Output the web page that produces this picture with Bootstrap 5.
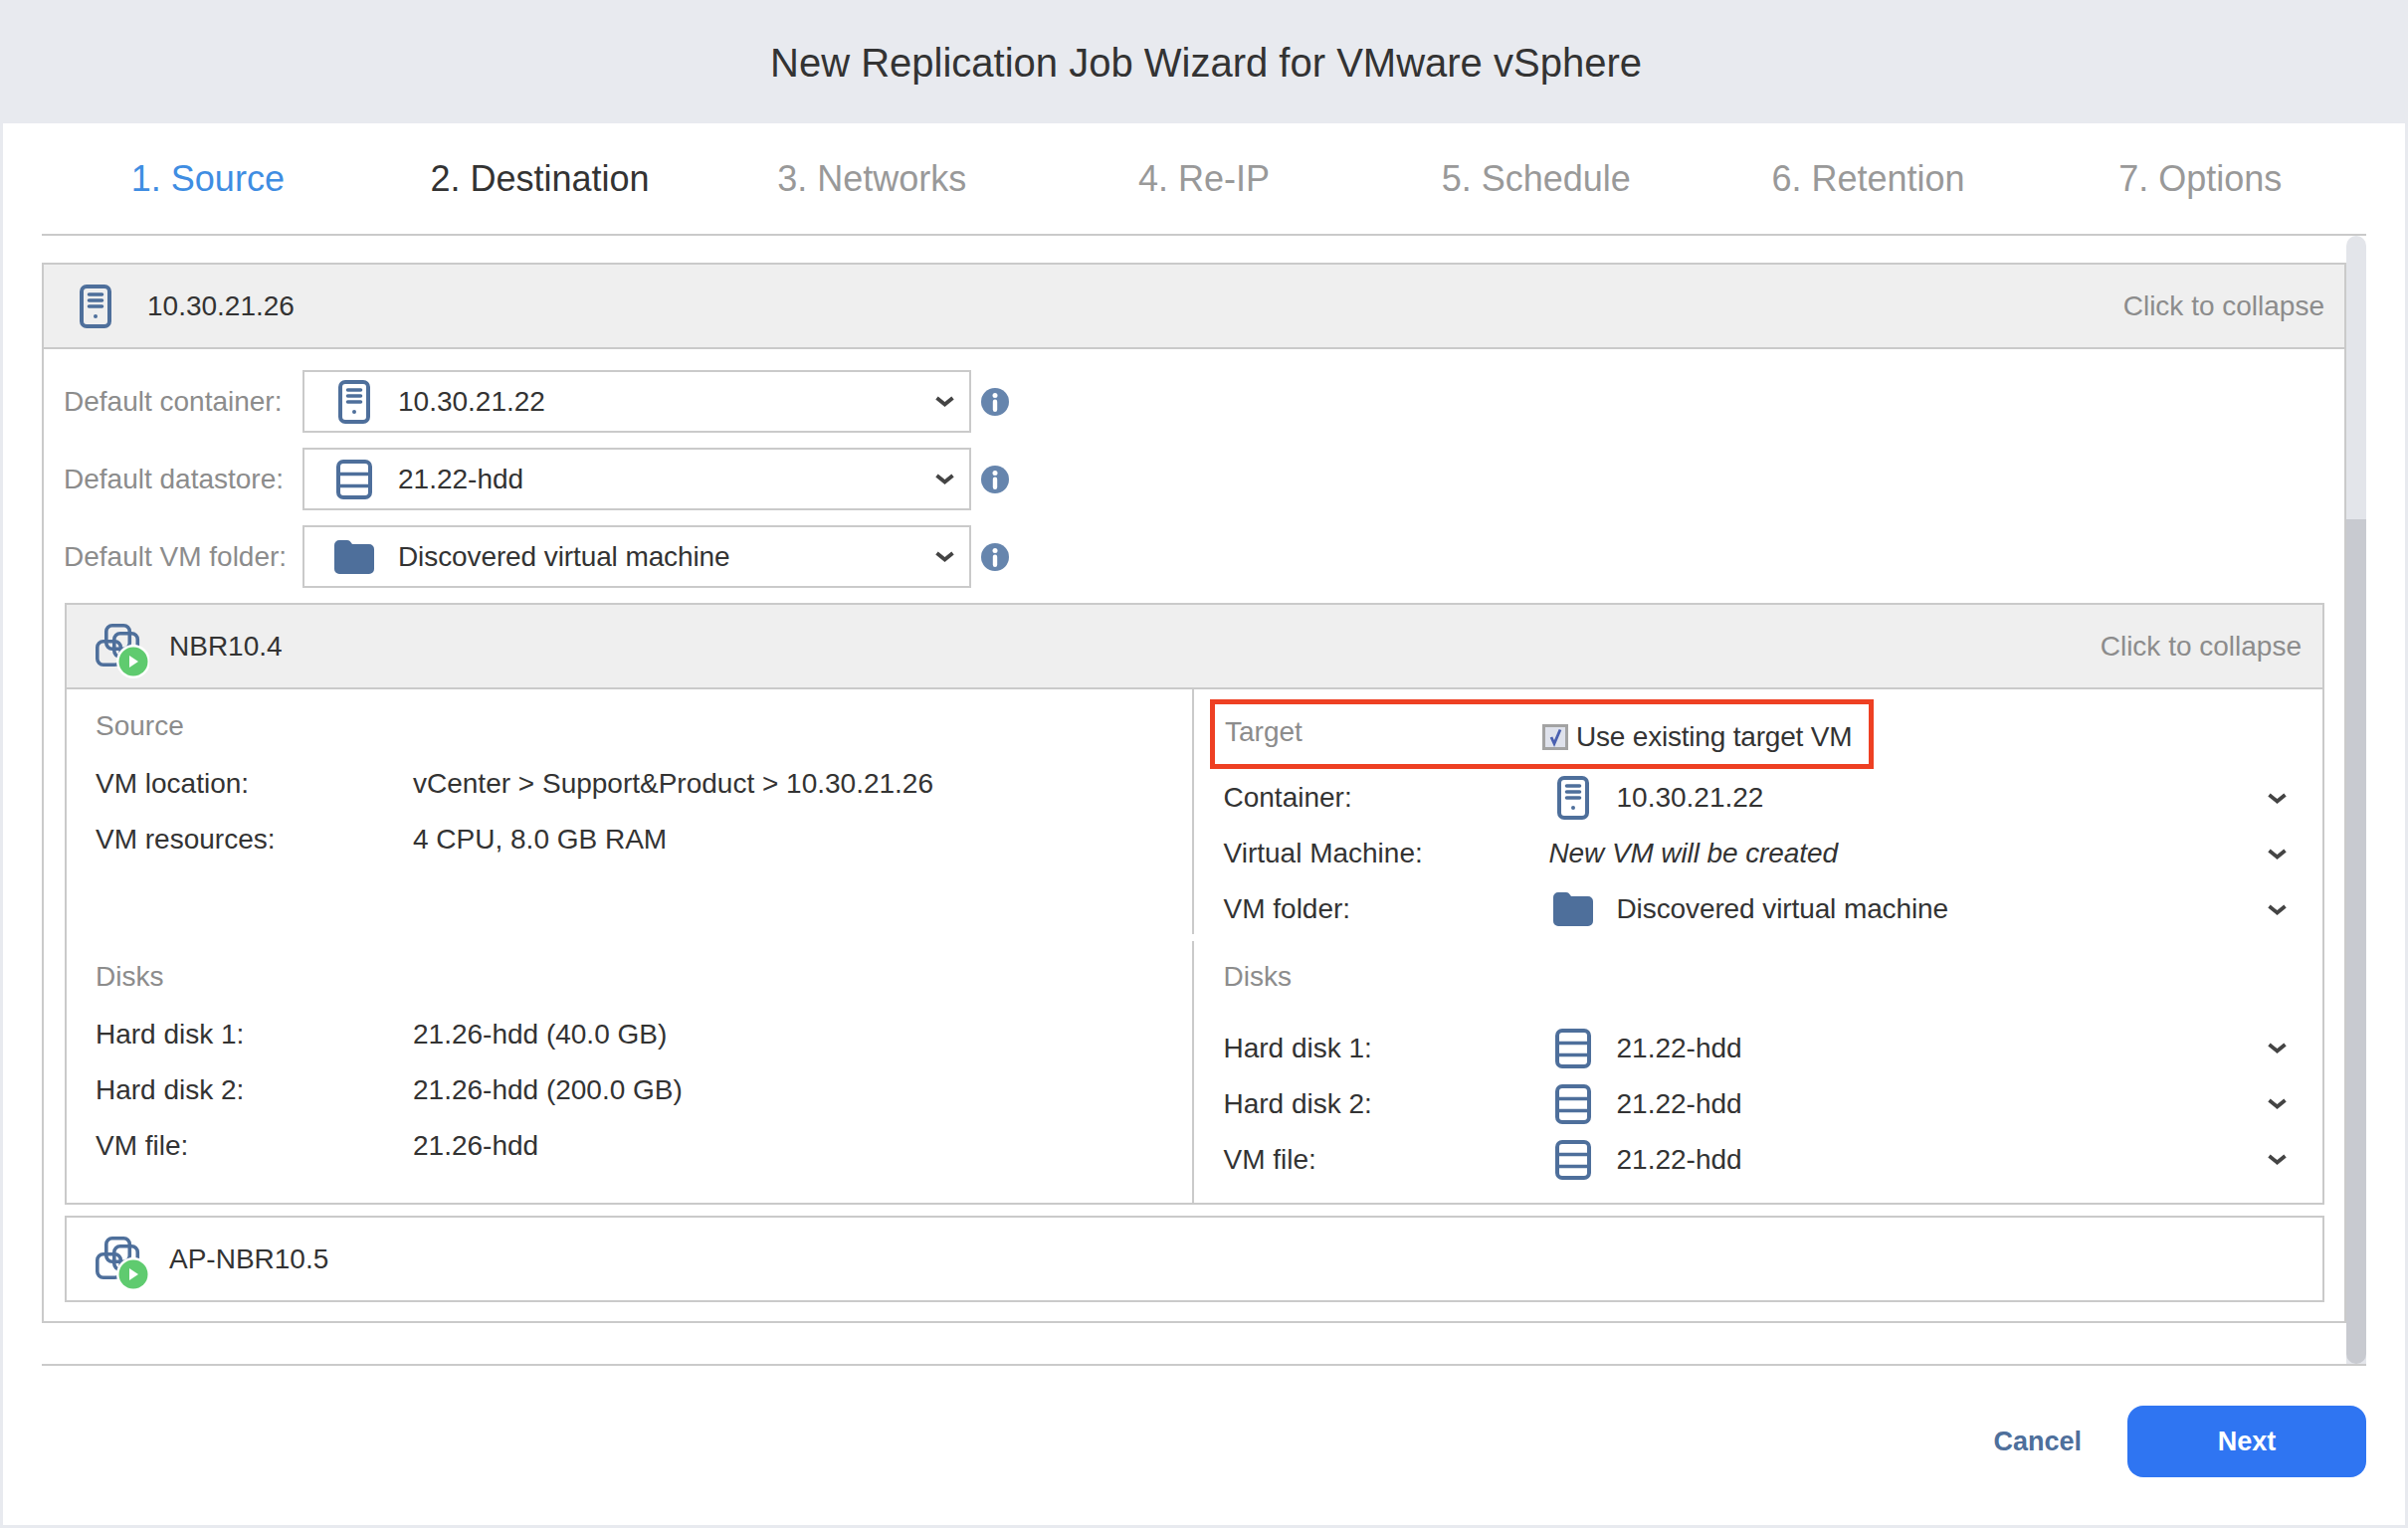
<!DOCTYPE html>
<html lang="en"><head><meta charset="utf-8"><title>New Replication Job Wizard</title>
<link href="https://cdn.jsdelivr.net/npm/bootstrap@5.3.0/dist/css/bootstrap.min.css" rel="stylesheet">
<style>
html,body{height:1536px;overflow:hidden}
body{background:#e8eaef;font-family:"Liberation Sans",Arial,sans-serif;font-size:28px;color:#333}
.wiz-title{height:124px;font-size:40px;line-height:127px;color:#333;margin:0;font-weight:400;padding-left:4px}
.wiz-sheet{height:1409px;margin:0 3px 3px 3px;padding:0 39px 0 39px;background:#fff}
.wiz-tabs{height:113px;border-bottom:2px solid #cacaca}
.wiz-tabs .nav-link{font-size:36px;color:#999;padding:0;line-height:111px}
.wiz-tabs .nav-link.is-on{color:#3f8de2}
.wiz-tabs .nav-link.is-next{color:#333}
.wiz-scroll{height:1134px}
.wiz-content{width:2316px;padding-top:27px}
.wiz-track{width:20px;background:#e3e5ea;border-radius:10px 10px 0 0}
.wiz-thumb{margin-top:285px;height:849px;background:#c8cad0;border-radius:0 0 10px 10px}
.pane{border:2px solid #cacaca}
.pane-outer{height:1066px;width:2316px}
.pane-head{background:#efefef;border-bottom:2px solid #cacaca}
.pane-outer>.pane-head{height:85px;padding:0 20px 0 36px}
.pane-inner .pane-head{height:85px;padding:0 21px 0 29px}
.hint{color:#8c8c8c}
.gap-icon{margin-right:36px}
.gap-vm{margin-right:20px;margin-top:9px}
.field-list{padding:21px 21px 0 20px;gap:15px}
.field-label{width:240px;color:#8c8c8c}
.fake-select{width:672px;height:63px;border:2px solid #cacaca;padding-right:15px}
.fake-select>span:nth-child(2){padding-top:1px}
.ico-slot{width:48px;margin-left:26px;margin-right:20px}
.info-dot{margin-left:10px}
.pane-inner{margin:15px 0 0 21px;width:2271px}
.pane-tail{margin:11px 0 0 21px;width:2271px;height:87px}
.pane-tail .pane-head{background:#fff;border-bottom:0;padding:0 22px 0 29px;height:83px}
.split-top{height:246px}
.split-bottom{height:263px;margin-top:7px}
.side-l{width:1131px;padding-left:29px}
.side-r{flex:1;border-left:2px solid #cacaca;padding-left:29.5px;padding-right:36.5px}
.sect-top{padding-top:9px}
.sect-low{padding-top:8px}
.sect-name{height:56px;line-height:56px;color:#8c8c8c;margin-bottom:2px}
.info-line{height:56.2px;line-height:56px}
.info-key{width:319px}
.r-key{width:327px}
.tight{letter-spacing:-.1px}
.low-r .sect-name{margin-bottom:15.5px}
.ico-inline{width:48px;margin:0 20px 0 0}
.red-box{margin:10px 0 1px -13.5px;width:667px;height:70px;border:5px solid #ee4023;padding-left:10px}
.red-box .sect-name{height:60px;line-height:56px;margin:0;width:327px}
.use-check.form-check-input[type=checkbox]{margin:0;width:26px;height:26px;border:3px solid #a3a3a3;border-radius:0;background-color:#dfe2ec;float:none}
.use-check.form-check-input[type=checkbox]:checked{background-color:#dfe2ec;border-color:#a3a3a3;background-size:100%;background-image:url("data:image/svg+xml,%3Csvg xmlns='http://www.w3.org/2000/svg' viewBox='0 0 20 20'%3E%3Cpath d='M6 10l3 6.500L15 2.500' fill='none' stroke='%234a60b0' stroke-width='2.800'/%3E%3C/svg%3E")}
.check-wrap{margin:17px 0 0 -8px;gap:8px}
.check-wrap label{line-height:32px;letter-spacing:-.2px}
.btn-next.btn{width:240px;height:72px;background:#2f75f2;border:0;border-radius:16px;color:#fff;font-size:27px;font-weight:700;padding:0}
.btn-cancel.btn{color:#4e6f9b;font-size:27px;font-weight:700;padding:0;border:0;margin-right:46px}
.wiz-foot{height:162px;border-top:2px solid #cacaca;padding-top:40px}
.ital{font-style:italic}
</style></head>
<body>
<svg width="0" height="0" class="d-block" aria-hidden="true"><defs>
<symbol id="i-srv" viewBox="0 0 32 44"><rect x="2" y="2" width="28" height="40" rx="5" fill="none" stroke="#4e6f9b" stroke-width="4"/><path d="M9.5 10h13M9.500 16h13M9.500 22h13" stroke="#4e6f9b" stroke-width="3.600" stroke-linecap="round"/><circle cx="16" cy="32" r="2" fill="#4e6f9b"/></symbol>
<symbol id="i-ds" viewBox="0 0 36 40"><rect x="2" y="2" width="32" height="36" rx="5" fill="none" stroke="#4e6f9b" stroke-width="4"/><path d="M2 14.500h32M2 26.500h32" stroke="#4e6f9b" stroke-width="3.600"/></symbol>
<symbol id="i-fld" viewBox="0 0 40 34"><path fill="#4e6f9b" d="M5 0H13a4 4 0 0 1 3.500 2L18 4H35a5 5 0 0 1 5 5V29a5 5 0 0 1-5 5H5a5 5 0 0 1-5-5V5a5 5 0 0 1 5-5z"/></symbol>
<symbol id="i-chv" viewBox="0 0 19 11"><path d="M1.500 2L9.500 8.500 17.500 2" fill="none" stroke="#444" stroke-width="3.800"/></symbol>
<symbol id="i-inf" viewBox="0 0 28 28"><circle cx="14" cy="14" r="14" fill="#6685ad"/><circle cx="14" cy="7.500" r="2.500" fill="#fff"/><rect x="11.800" y="11.500" width="4.400" height="12.500" rx="2.200" fill="#fff"/></symbol>
<symbol id="i-vm" viewBox="0 0 54 58"><g fill="none" stroke="#4e6f9b" stroke-width="3.600"><rect x="10.800" y="3.800" width="23.500" height="23.500" rx="6"/><rect x="18.800" y="11.800" width="23.500" height="23.500" rx="6"/><rect x="1.800" y="19.800" width="23.500" height="23.500" rx="6"/></g><circle cx="38" cy="40" r="17" fill="#fff"/><circle cx="38" cy="40" r="14.500" fill="#5fcb6f"/><path d="M34 34l9 6-9 6z" fill="#fff"/></symbol>
</defs></svg>

<h1 class="wiz-title text-center">New Replication Job Wizard for VMware vSphere</h1>
<div class="wiz-sheet">
  <ul class="nav nav-justified wiz-tabs">
    <li class="nav-item"><a class="nav-link is-on" href="#">1. Source</a></li>
    <li class="nav-item"><a class="nav-link is-next" href="#">2. Destination</a></li>
    <li class="nav-item"><a class="nav-link" href="#">3. Networks</a></li>
    <li class="nav-item"><a class="nav-link" href="#">4. Re-IP</a></li>
    <li class="nav-item"><a class="nav-link" href="#">5. Schedule</a></li>
    <li class="nav-item"><a class="nav-link" href="#">6. Retention</a></li>
    <li class="nav-item"><a class="nav-link" href="#">7. Options</a></li>
  </ul>
  <div class="d-flex wiz-scroll">
    <div class="wiz-content">
      <div class="pane pane-outer">
        <div class="pane-head d-flex align-items-center">
          <svg class="gap-icon" width="32" height="44"><use href="#i-srv"/></svg>
          <span>10.30.21.26</span><span class="hint ms-auto">Click to collapse</span>
        </div>
        <div class="d-flex flex-column field-list">
          <div class="d-flex align-items-center">
            <span class="field-label">Default container:</span>
            <div class="fake-select d-flex align-items-center"><span class="ico-slot d-flex justify-content-center"><svg width="32" height="44"><use href="#i-srv"/></svg></span><span>10.30.21.22</span><svg class="ms-auto" width="19" height="11"><use href="#i-chv"/></svg></div>
            <svg class="info-dot" width="28" height="28"><use href="#i-inf"/></svg>
          </div>
          <div class="d-flex align-items-center">
            <span class="field-label">Default datastore:</span>
            <div class="fake-select d-flex align-items-center"><span class="ico-slot d-flex justify-content-center"><svg width="36" height="40"><use href="#i-ds"/></svg></span><span>21.22-hdd</span><svg class="ms-auto" width="19" height="11"><use href="#i-chv"/></svg></div>
            <svg class="info-dot" width="28" height="28"><use href="#i-inf"/></svg>
          </div>
          <div class="d-flex align-items-center">
            <span class="field-label">Default VM folder:</span>
            <div class="fake-select d-flex align-items-center"><span class="ico-slot d-flex justify-content-center"><svg width="40" height="34"><use href="#i-fld"/></svg></span><span class="tight">Discovered virtual machine</span><svg class="ms-auto" width="19" height="11"><use href="#i-chv"/></svg></div>
            <svg class="info-dot" width="28" height="28"><use href="#i-inf"/></svg>
          </div>
        </div>
        <div class="pane pane-inner">
          <div class="pane-head d-flex align-items-center">
            <svg class="gap-vm" width="54" height="58"><use href="#i-vm"/></svg>
            <span>NBR10.4</span><span class="hint ms-auto">Click to collapse</span>
          </div>
          <div class="d-flex split-top">
            <div class="side-l sect-top">
              <div class="sect-name">Source</div>
              <div class="d-flex info-line"><span class="info-key">VM location:</span><span>vCenter &gt; Support&amp;Product &gt; 10.30.21.26</span></div>
              <div class="d-flex info-line"><span class="info-key">VM resources:</span><span>4 CPU, 8.0 GB RAM</span></div>
            </div>
            <div class="side-r">
              <div class="red-box d-flex">
                <div class="sect-name">Target</div>
                <div class="check-wrap d-flex align-items-center align-self-start"><input class="form-check-input use-check" type="checkbox" id="useVm" checked><label for="useVm">Use existing target VM</label></div>
              </div>
              <div class="d-flex align-items-center info-line"><span class="r-key">Container:</span><span class="ico-inline d-flex justify-content-center"><svg width="32" height="44"><use href="#i-srv"/></svg></span><span>10.30.21.22</span><svg class="ms-auto" width="19" height="11"><use href="#i-chv"/></svg></div>
              <div class="d-flex align-items-center info-line"><span class="r-key">Virtual Machine:</span><span class="ital tight">New VM will be created</span><svg class="ms-auto" width="19" height="11"><use href="#i-chv"/></svg></div>
              <div class="d-flex align-items-center info-line"><span class="r-key">VM folder:</span><span class="ico-inline d-flex justify-content-center"><svg width="40" height="34"><use href="#i-fld"/></svg></span><span class="tight">Discovered virtual machine</span><svg class="ms-auto" width="19" height="11"><use href="#i-chv"/></svg></div>
            </div>
          </div>
          <div class="d-flex split-bottom">
            <div class="side-l sect-low">
              <div class="sect-name">Disks</div>
              <div class="d-flex info-line"><span class="info-key">Hard disk 1:</span><span>21.26-hdd (40.0 GB)</span></div>
              <div class="d-flex info-line"><span class="info-key">Hard disk 2:</span><span>21.26-hdd (200.0 GB)</span></div>
              <div class="d-flex info-line"><span class="info-key">VM file:</span><span>21.26-hdd</span></div>
            </div>
            <div class="side-r sect-low low-r">
              <div class="sect-name">Disks</div>
              <div class="d-flex align-items-center info-line"><span class="r-key">Hard disk 1:</span><span class="ico-inline d-flex justify-content-center"><svg width="36" height="40"><use href="#i-ds"/></svg></span><span>21.22-hdd</span><svg class="ms-auto" width="19" height="11"><use href="#i-chv"/></svg></div>
              <div class="d-flex align-items-center info-line"><span class="r-key">Hard disk 2:</span><span class="ico-inline d-flex justify-content-center"><svg width="36" height="40"><use href="#i-ds"/></svg></span><span>21.22-hdd</span><svg class="ms-auto" width="19" height="11"><use href="#i-chv"/></svg></div>
              <div class="d-flex align-items-center info-line"><span class="r-key">VM file:</span><span class="ico-inline d-flex justify-content-center"><svg width="36" height="40"><use href="#i-ds"/></svg></span><span>21.22-hdd</span><svg class="ms-auto" width="19" height="11"><use href="#i-chv"/></svg></div>
            </div>
          </div>
        </div>
        <div class="pane pane-tail">
          <div class="pane-head d-flex align-items-center">
            <svg class="gap-vm" width="54" height="58"><use href="#i-vm"/></svg>
            <span>AP-NBR10.5</span>
          </div>
        </div>
      </div>
    </div>
    <div class="wiz-track"><div class="wiz-thumb"></div></div>
  </div>
  <div class="wiz-foot d-flex justify-content-end align-items-start">
    <button class="btn btn-cancel mt-3" type="button">Cancel</button>
    <button class="btn btn-next" type="button">Next</button>
  </div>
</div>
</body></html>
